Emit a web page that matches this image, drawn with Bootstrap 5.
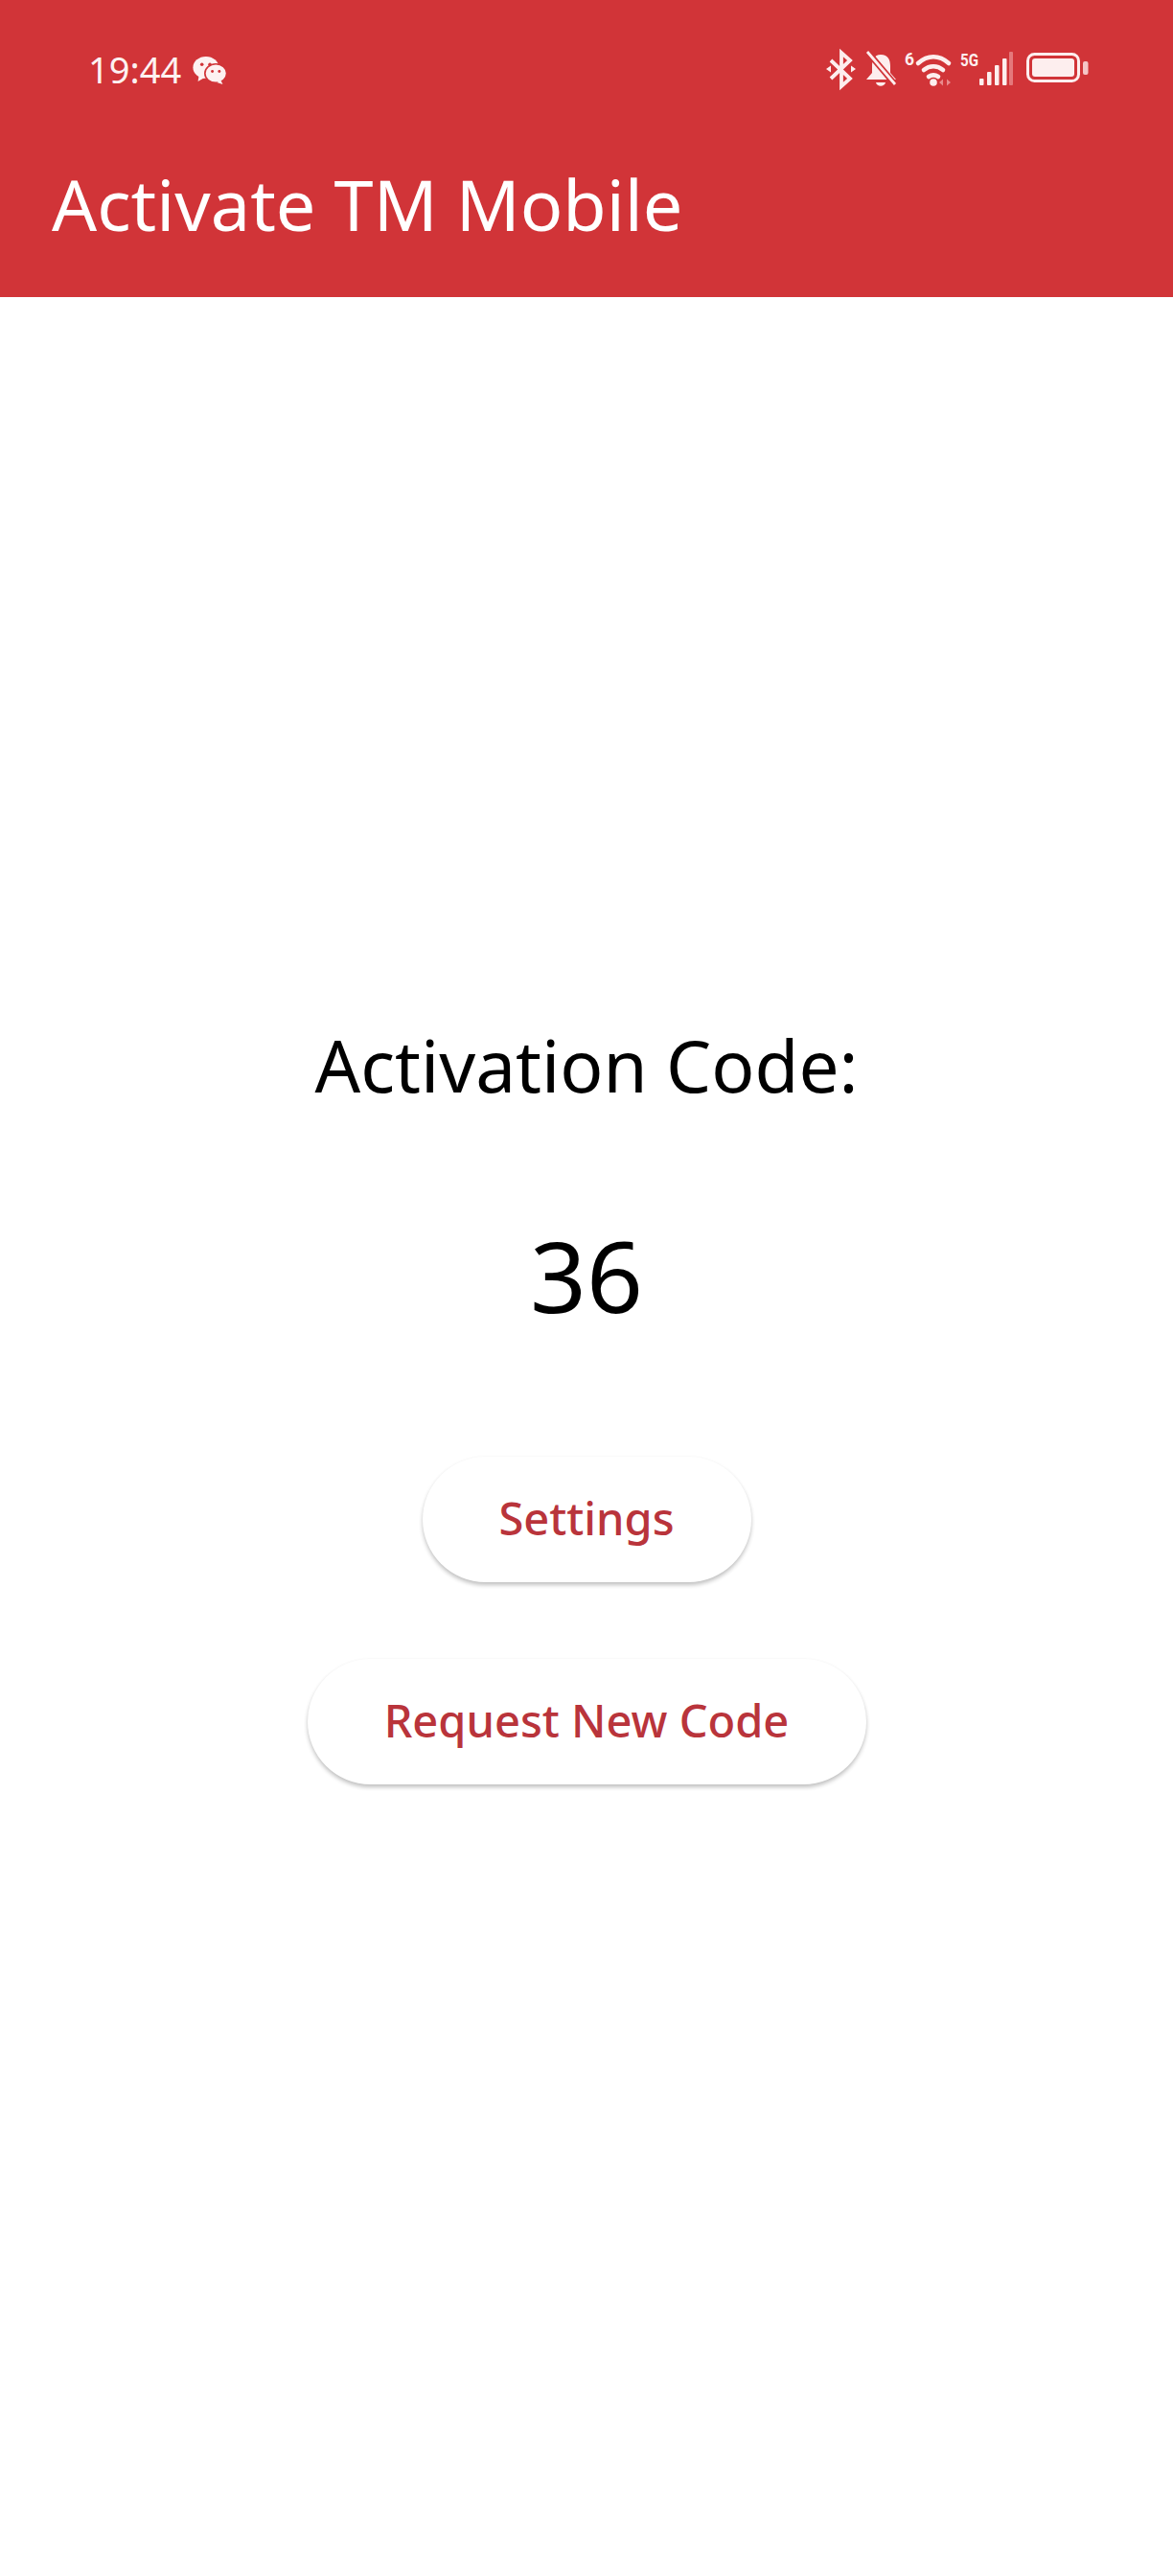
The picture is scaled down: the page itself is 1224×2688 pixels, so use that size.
<!DOCTYPE html>
<html lang="en">
<head>
<meta charset="utf-8">
<title>Activate TM Mobile</title>
<link href="https://cdn.jsdelivr.net/npm/bootstrap@5.3.0/dist/css/bootstrap.min.css" rel="stylesheet">
<style>
html,body{height:100%}
body{background:#fff;font-family:"Noto Sans","Open Sans",sans-serif;color:#000;overflow:hidden}
.app-head{background:#d13438;height:310px;color:#fff}
.status-row{height:146px;padding:0 88px 0 92px}
.clock{font-size:38px;line-height:1;color:#fdf1f1;padding-bottom:3px}
.status-left{gap:12px}
.app-title{font-size:73.8px;line-height:86px;margin:24px 0 0 54px;font-weight:400;color:#fff}
.code-label{font-size:74.7px;line-height:90px;margin:756px 0 0;font-weight:400}
.code-value{font-size:103px;line-height:120px;margin:114px 0 0;font-weight:400}
.pill{background:#fff;color:#b9343b;font-size:47px;font-weight:500;line-height:60px;height:131px;padding:0 0 4px;border:0;border-radius:66px;box-shadow:0 3px 4px rgba(0,0,0,.24),0 0 4px rgba(0,0,0,.02);display:flex;align-items:center;justify-content:center}
.pill:hover,.pill:active{background:#fff;color:#b9343b}
.pill-a{width:343px;margin-top:130px}
.pill-b{width:583px;margin-top:80px}
</style>
</head>
<body>
<header class="app-head">
  <div class="status-row d-flex justify-content-between align-items-center">
    <div class="status-left d-flex align-items-center">
      <span class="clock">19:44</span>
      <svg width="36" height="29" viewBox="0 0 34 28" aria-hidden="true">
        <ellipse cx="13" cy="11" rx="13" ry="11" fill="#fdf1f1"/>
        <path d="M6 19l-1 6 7-4z" fill="#fdf1f1"/>
        <circle cx="9" cy="8" r="1.7" fill="#d13438"/><circle cx="17" cy="8" r="1.7" fill="#d13438"/>
        <ellipse cx="23" cy="17" rx="11" ry="9.5" fill="#fdf1f1" stroke="#d13438" stroke-width="1.6"/>
        <path d="M28 24l2 4-6-2z" fill="#fdf1f1"/>
        <circle cx="19.5" cy="15" r="1.4" fill="#d13438"/><circle cx="26.5" cy="15" r="1.4" fill="#d13438"/>
      </svg>
    </div>
    <div class="d-flex align-items-center">
      <svg width="276" height="60" viewBox="860 44 276 60" aria-hidden="true" font-family="Roboto, 'Liberation Sans', sans-serif" font-weight="700">
        <g fill="none" stroke="#fdeeee" stroke-width="3.8">
          <path d="M867 64l20 19-9 8V56l9 8-20 19"/>
        </g>
        <path d="M862 73l5-3.500v7zM893 73l-5-3.500v7z" fill="#fdeeee"/>
        <path d="M919 58c8 0 10 6 10 12v7l6 7h-31l6-7v-7c0-6 2-12 9-12z" fill="#fdeeee"/>
        <path d="M914 87h10c-1 5-9 5-10 0z" fill="#fdeeee"/>
        <path d="M906 56l27 32" stroke="#d13438" stroke-width="6.500"/>
        <path d="M905 55l29 34" stroke="#fdeeee" stroke-width="2.800"/>
        <text x="944" y="69" font-size="18" fill="#fdeeee" textLength="10" lengthAdjust="spacingAndGlyphs">6</text>
        <g fill="none" stroke="#fdeeee" stroke-width="4.600" stroke-linecap="round">
          <path d="M958 67c10-9 22-9 32 0"/>
          <path d="M964 74c6-5 14-5 20 0"/>
          <path d="M969 81c3-2 7-2 10 0"/>
        </g>
        <circle cx="974" cy="87" r="3.800" fill="#fdeeee"/>
        <path d="M980 87l4-3.500v7zM992 87l-4-3.500v7z" fill="#e98a8c"/>
        <text x="1002" y="70" font-size="19" fill="#fdeeee" textLength="19" lengthAdjust="spacingAndGlyphs">5G</text>
        <g fill="#fdeeee">
          <rect x="1022" y="83" width="4.500" height="7" rx="1"/>
          <rect x="1030" y="76" width="4.500" height="14" rx="1"/>
          <rect x="1038" y="69" width="4.500" height="21" rx="1"/>
          <rect x="1046" y="62" width="4.500" height="28" rx="1"/>
        </g>
        <rect x="1053" y="55" width="4" height="35" rx="1" fill="#e5787b"/>
        <rect x="1072.500" y="57.500" width="53" height="28" rx="7" fill="none" stroke="#fdeeee" stroke-width="3"/>
        <rect x="1077" y="62" width="44" height="19" rx="3" fill="#fdeeee"/>
        <rect x="1130" y="65" width="5.500" height="14" rx="2" fill="#f5c5c6"/>
      </svg>
    </div>
  </div>
  <h1 class="app-title">Activate TM Mobile</h1>
</header>
<main class="d-flex flex-column align-items-center">
  <h2 class="code-label">Activation Code:</h2>
  <div class="code-value">36</div>
  <button type="button" class="btn pill pill-a">Settings</button>
  <button type="button" class="btn pill pill-b">Request New Code</button>
</main>
<script src="https://cdn.jsdelivr.net/npm/bootstrap@5.3.0/dist/js/bootstrap.bundle.min.js"></script>
</body>
</html>
